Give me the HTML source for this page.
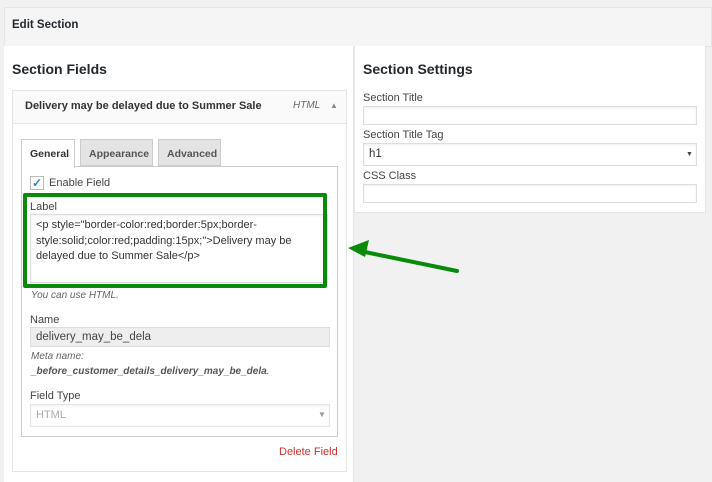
<!DOCTYPE html>
<html><head><style>
*{box-sizing:border-box;margin:0;padding:0}
body{width:712px;height:482px;background:#f1f1f1;font-family:"Liberation Sans",sans-serif;color:#32373c;position:relative;overflow:hidden;font-size:11px}
.a{position:absolute}
.in{position:absolute;background:#fff;border:1px solid #ddd;box-shadow:inset 0 1px 2px rgba(0,0,0,.07)}
.lbl{position:absolute;font-size:11px;color:#444}
h3{position:absolute;font-size:14px;font-weight:bold;color:#23282d}
</style></head><body>
<div class="a" style="left:4px;top:7px;width:708px;height:40px;background:#f5f5f5;border:1px solid #e5e5e5"></div>
<div class="a" style="left:12px;top:19px;font-size:11.5px;font-weight:bold;color:#23282d">Edit Section</div>
<div class="a" style="left:4px;top:46px;width:350px;height:436px;background:#fff;border-right:1px solid #e5e5e5"></div>
<div class="a" style="left:354px;top:46px;width:352px;height:167px;background:#fff;border:1px solid #e5e5e5;border-top:none"></div>

<h3 style="left:12px;top:61px">Section Fields</h3>
<div class="a" style="left:12px;top:90px;width:335px;height:382px;border:1px solid #e5e5e5;background:#fff"></div>
<div class="a" style="left:13px;top:91px;width:333px;height:33px;background:#fafafa;border-bottom:1px solid #e5e5e5"></div>
<div class="a" style="left:25px;top:100px;font-size:11px;font-weight:bold;color:#333">Delivery may be delayed due to Summer Sale</div>
<div class="a" style="left:293px;top:100px;font-size:10px;font-style:italic;color:#666">HTML</div>
<div class="a" style="left:330px;top:101px;font-size:8px;color:#888">▲</div>

<div class="a" style="left:21px;top:166px;width:317px;height:271px;border:1px solid #ccc"></div>
<div class="a" style="left:21px;top:139px;width:54px;height:29px;background:#fff;border:1px solid #ccc;border-bottom:none"></div>
<div class="a" style="left:30px;top:148px;font-size:10.5px;font-weight:bold;color:#333">General</div>
<div class="a" style="left:80px;top:139px;width:73px;height:27px;background:#e4e4e4;border:1px solid #ccc"></div>
<div class="a" style="left:89px;top:148px;font-size:10.5px;font-weight:bold;color:#555">Appearance</div>
<div class="a" style="left:158px;top:139px;width:63px;height:27px;background:#e4e4e4;border:1px solid #ccc"></div>
<div class="a" style="left:167px;top:148px;font-size:10.5px;font-weight:bold;color:#555">Advanced</div>

<div class="a" style="left:30px;top:176px;width:14px;height:14px;border:1px solid #bbb;background:#fff;color:#1e8cbe;font-size:12px;line-height:12px;text-align:center;font-weight:bold">✓</div>
<div class="lbl" style="left:49px;top:177px">Enable Field</div>
<div class="lbl" style="left:30px;top:201px">Label</div>
<div class="in" style="left:30px;top:214px;width:298px;height:69px"></div>
<div class="a" style="left:36px;top:218px;font-size:11px;line-height:15.5px;color:#333;width:290px">&lt;p style="border-color:red;border:5px;border-style:solid;color:red;padding:15px;"&gt;Delivery may be delayed due to Summer Sale&lt;/p&gt;</div>
<div class="a" style="left:23px;top:193px;width:304px;height:95px;border:4px solid #0a8a0a;border-radius:2px"></div>
<div class="a" style="left:31px;top:290px;font-size:10px;font-style:italic;color:#666">You can use HTML.</div>
<div class="lbl" style="left:30px;top:314px">Name</div>
<div class="a" style="left:30px;top:327px;width:300px;height:20px;background:#eee;border:1px solid #ddd"></div>
<div class="a" style="left:36px;top:331px;font-size:11.5px;color:#444">delivery_may_be_dela</div>
<div class="a" style="left:31px;top:351px;font-size:10px;font-style:italic;color:#666">Meta name:</div>
<div class="a" style="left:31px;top:366px;font-size:10px;font-style:italic;font-weight:bold;color:#555">_before_customer_details_delivery_may_be_dela<span style="font-weight:normal">.</span></div>
<div class="lbl" style="left:30px;top:390px">Field Type</div>
<div class="in" style="left:30px;top:404px;width:300px;height:23px;border-color:#e5e5e5"></div>
<div class="a" style="left:36px;top:409px;font-size:11px;color:#aaa">HTML</div>
<div class="a" style="left:318px;top:410px;font-size:8px;color:#999">▼</div>
<div class="a" style="left:279px;top:446px;font-size:11px;color:#c9302c">Delete Field</div>

<h3 style="left:363px;top:61px">Section Settings</h3>
<div class="lbl" style="left:363px;top:92px">Section Title</div>
<div class="in" style="left:363px;top:106px;width:334px;height:19px"></div>
<div class="lbl" style="left:363px;top:129px">Section Title Tag</div>
<div class="in" style="left:363px;top:143px;width:334px;height:23px"></div>
<div class="a" style="left:369px;top:148px;font-size:11.5px;color:#333">h1</div>
<div class="a" style="left:686px;top:151px;font-size:7px;color:#444">▼</div>
<div class="lbl" style="left:363px;top:170px">CSS Class</div>
<div class="in" style="left:363px;top:184px;width:334px;height:19px"></div>

<svg class="a" style="left:0;top:0" width="712" height="482">
<line x1="457" y1="271" x2="360" y2="251" stroke="#0a8a0a" stroke-width="4" stroke-linecap="round"/>
<polygon points="348,248 369,240 365,257" fill="#0a8a0a"/>
</svg>
</body></html>
